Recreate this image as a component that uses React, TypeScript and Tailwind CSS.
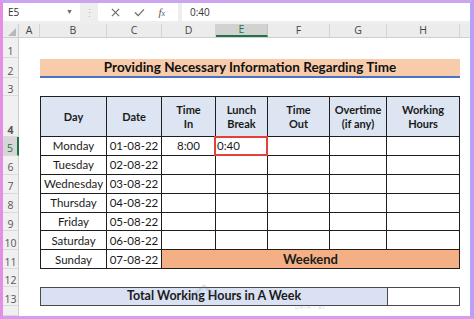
import React from "react";

const W = {
  rh: "w-[16px]",
  A: "w-[21px]",
  B: "w-[67px]",
  C: "w-[55px]",
  D: "w-[54px]",
  E: "w-[52px]",
  F: "w-[62px]",
  G: "w-[57px]",
  H: "w-[73px]",
};

function RowHead({ n, active }: { n?: number; active?: boolean }) {
  return (
    <div
      className={
        "w-[16px] shrink-0 flex items-end justify-center pb-[1px] text-[10.5px] leading-none border-b border-[#dadada] font-['Open_Sans',sans-serif] " +
        (active
          ? "bg-[#d6d6d6] text-[#217346] border-r-2 border-r-[#217346]"
          : "bg-[#f0f0f0] text-[#555] border-r border-r-[#cfcfcf]")
      }
    >
      {n ?? ""}
    </div>
  );
}

const tb = "border-r border-b border-[#1e1e1e]";

function DataRow({
  n,
  day,
  date,
  active,
  children,
}: {
  n: number;
  day: string;
  date: string;
  active?: boolean;
  children?: React.ReactNode;
}) {
  return (
    <div className="flex h-[18.9px]">
      <RowHead n={n} active={active} />
      <div className={W.A} />
      <div className={W.B + " " + tb + " border-l flex items-center justify-center"}>{day}</div>
      <div className={W.C + " " + tb + " flex items-center justify-center"}>{date}</div>
      {children ?? (
        <>
          <div className={W.D + " " + tb} />
          <div className={W.E + " " + tb} />
          <div className={W.F + " " + tb} />
          <div className={W.G + " " + tb} />
          <div className={W.H + " " + tb} />
        </>
      )}
    </div>
  );
}

export default function App() {
  return (
    <div className="w-[474px] h-[319px] overflow-hidden border-l-[3px] border-l-[#e28fe4] border-t-[3px] border-t-[#caa6f2] border-r-[4px] border-r-[#b8a0f4] border-b-[3px] border-b-[#d79bf0] font-['Lato',sans-serif] text-[11.5px] text-[#1a1a1a]">
      <div className="w-full h-full bg-white flex flex-col">
        {/* Formula bar */}
        <div className="flex h-[18px] bg-[#eeeeee] shrink-0">
          <div className="w-[77px] bg-white flex items-center justify-between pl-[5px] pr-[7px] text-[#333] font-['Open_Sans',sans-serif] text-[10px]">
            <span>E5</span>
            <span className="text-[7px] text-[#666]">▼</span>
          </div>
          <div className="w-[18px] flex items-center justify-center">
            <span className="text-[#bdbdbd] text-[11px] leading-none">⋮</span>
          </div>
          <div className="w-[80px] bg-white flex items-center justify-around px-[6px] text-[#666]">
            <svg width="9" height="9" viewBox="0 0 10 10">
              <path d="M1 1 L9 9 M9 1 L1 9" stroke="#6b6b6b" strokeWidth="1.3" fill="none" />
            </svg>
            <svg width="11" height="9" viewBox="0 0 12 10">
              <path d="M1 5 L4.5 8.5 L11 1.5" stroke="#6b6b6b" strokeWidth="1.4" fill="none" />
            </svg>
            <span className="italic font-['Liberation_Serif',serif] text-[11px] text-[#555]">
              f<span className="text-[8px]">x</span>
            </span>
          </div>
          <div className="w-[4px]" />
          <div className="flex-1 bg-white flex items-center pl-[8px] text-[#333] font-['Open_Sans',sans-serif] text-[10px]">
            0:40
          </div>
        </div>
        <div className="h-[3px] bg-[#eeeeee] shrink-0" />

        {/* Column headers */}
        <div className="flex h-[14px] bg-[#ececec] text-[#444] text-[10.5px] font-['Open_Sans',sans-serif] shrink-0 border-b border-[#cfcfcf]">
          <div className="w-[16px] border-r border-[#cfcfcf] relative">
            <svg className="absolute right-[2px] bottom-[1px]" width="8" height="8" viewBox="0 0 8 8">
              <path d="M8 0 L8 8 L0 8 Z" fill="#b8b8b8" />
            </svg>
          </div>
          {(
            [
              ["A", W.A],
              ["B", W.B],
              ["C", W.C],
              ["D", W.D],
            ] as const
          ).map(([l, w]) => (
            <div key={l} className={w + " border-r border-[#d4d4d4] flex items-center justify-center"}>
              {l}
            </div>
          ))}
          <div className={W.E + " bg-[#d2d2d2] border-r border-[#c4c4c4] border-b-2 border-b-[#217346] flex items-center justify-center text-[#217346]"}>
            E
          </div>
          {(
            [
              ["F", W.F],
              ["G", W.G],
              ["H", W.H],
            ] as const
          ).map(([l, w]) => (
            <div key={l} className={w + " border-r border-[#d4d4d4] flex items-center justify-center"}>
              {l}
            </div>
          ))}
          <div className="flex-1" />
        </div>

        {/* Row 1 */}
        <div className="flex h-[20px]">
          <RowHead n={1} />
        </div>
        {/* Row 2 title */}
        <div className="flex h-[20px]">
          <RowHead n={2} />
          <div className={W.A} />
          <div className="w-[420px] flex flex-col">
            <div className="h-[17px] mt-[1px] bg-[#f8cbab] flex items-center justify-center font-bold text-[13.5px] text-[#111]">
              Providing Necessary Information Regarding Time
            </div>
            <div className="h-[2px] bg-[#4a72c0]" />
          </div>
        </div>
        {/* Row 3 */}
        <div className="flex h-[18px]">
          <RowHead n={3} />
        </div>
        {/* Row 4 header */}
        <div className="flex h-[41px] font-bold text-[11px]">
          <RowHead n={4} />
          <div className={W.A} />
          {(
            [
              [W.B, "Day", ""],
              [W.C, "Date", ""],
              [W.D, "Time", "In"],
              [W.E, "Lunch", "Break"],
              [W.F, "Time", "Out"],
              [W.G, "Overtime", "(if any)"],
              [W.H, "Working", "Hours"],
            ] as const
          ).map(([w, a, b], i) => (
            <div
              key={i}
              className={
                w +
                " bg-[#dce5f1] border-t border-r border-b border-[#1e1e1e] flex flex-col items-center justify-center leading-[14px] " +
                (i === 0 ? "border-l" : "")
              }
            >
              <span>{a}</span>
              {b && <span>{b}</span>}
            </div>
          ))}
        </div>
        {/* Row 5 */}
        <DataRow n={5} day="Monday" date="01-08-22" active>
          <div className={W.D + " " + tb + " flex items-center justify-center"}>8:00</div>
          <div className={W.E + " " + tb + " relative flex items-center pl-[1px]"}>
            0:40
            <div className="absolute left-[-2px] top-[-1px] right-[-1px] bottom-[-1px] border-2 border-[#e3403a]" />
          </div>
          <div className={W.F + " " + tb} />
          <div className={W.G + " " + tb} />
          <div className={W.H + " " + tb} />
        </DataRow>
        <DataRow n={6} day="Tuesday" date="02-08-22" />
        <DataRow n={7} day="Wednesday" date="03-08-22" />
        <DataRow n={8} day="Thursday" date="04-08-22" />
        <DataRow n={9} day="Friday" date="05-08-22" />
        <DataRow n={10} day="Saturday" date="06-08-22" />
        <DataRow n={11} day="Sunday" date="07-08-22">
          <div className={"w-[298px] bg-[#f4b084] " + tb + " flex items-center justify-center font-bold text-[13px]"}>
            Weekend
          </div>
        </DataRow>
        {/* Row 12 */}
        <div className="flex h-[18px]">
          <RowHead n={12} />
        </div>
        {/* Row 13 */}
        <div className="flex h-[19px]">
          <RowHead n={13} />
          <div className={W.A} />
          <div className="w-[347px] bg-[#d9e1f2] border border-[#4a4a4a] border-r-0 relative flex items-center justify-center font-bold text-[12.5px]">
            Total Working Hours in A Week
            <svg className="absolute left-[148px] top-[-4px] opacity-20" width="30" height="14" viewBox="0 0 30 14">
              <path d="M2 13 L15 2 L28 13" stroke="#5b7bb0" strokeWidth="2.5" fill="none" />
            </svg>
            <div className="absolute left-[254px] top-[11px] leading-none opacity-30 text-[#4f6d9a] font-normal">
              <span className="text-[5px] tracking-[1px]">DATA · BI</span>
            </div>
          </div>
          <div className="w-[73px] bg-white border border-[#4a4a4a]" />
        </div>
        {/* Row 14 */}
        <div className="flex flex-1">
          <RowHead />
        </div>
      </div>
    </div>
  );
}
